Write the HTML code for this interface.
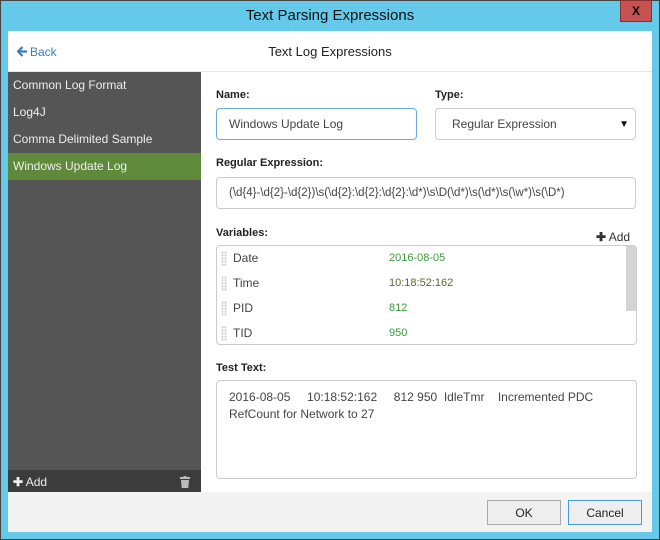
<!DOCTYPE html><html><head><style>
*{box-sizing:border-box;margin:0;padding:0}
body{width:660px;height:540px;background:#65c9ea;font-family:"Liberation Sans",sans-serif;position:relative;overflow:hidden;color:#333}
.a{position:absolute}
.border{left:0;top:0;width:660px;height:540px;border:1px solid #444;}
.lbl{font-size:11px;font-weight:bold;color:#222}
.inp{background:#fff;border:1px solid #ccc;border-radius:4px;font-size:12px;color:#444;padding-left:12px;display:flex;align-items:center}
.side div{height:27px;line-height:27px;padding-left:5px;color:#eee;font-size:12px}
.row{height:25px;position:relative;font-size:12px}
.row .n{position:absolute;left:16px;top:5px;color:#444}
.row .v{position:absolute;left:172px;top:6px;color:#3a9a3a;font-size:11px}
.row .g{position:absolute;left:4px;top:5px;width:6px;height:15px;background:radial-gradient(circle,#ccc 1px,transparent 1.2px) 0 0/3px 3px}
.btn{border:1px solid #aaa;background:#eee;font-size:12px;display:flex;align-items:center;justify-content:center;color:#222}
</style></head><body>
<div class="a border"></div>
<div class="a" style="left:0;top:7px;width:660px;text-align:center;font-size:15px;color:#111">Text Parsing Expressions</div>
<div class="a" style="left:620px;top:0;width:32px;height:22px;background:#c75050;border:1px solid #8a3030;color:#000;font-weight:bold;font-size:12px;text-align:center;line-height:20px">X</div>
<div class="a" style="left:8px;top:31px;width:644px;height:501px;background:#fff"></div>
<svg class="a" style="left:17px;top:46px" width="11" height="11" viewBox="0 0 11 11"><path d="M1 5.5H10M5.5 1L1 5.5 5.5 10" stroke="#3a7bbf" stroke-width="2.2" fill="none"/></svg>
<div class="a" style="left:30px;top:45px;font-size:12px;color:#3a7bbf">Back</div>
<div class="a" style="left:8px;top:44px;width:644px;text-align:center;font-size:13px;color:#222">Text Log Expressions</div>
<div class="a" style="left:8px;top:71px;width:644px;height:1px;background:#e4e4e4"></div>
<div class="a side" style="left:8px;top:72px;width:193px;height:420px;background:#555">
<div>Common Log Format</div><div>Log4J</div><div>Comma Delimited Sample</div><div style="background:#5f8a3c">Windows Update Log</div></div>
<div class="a" style="left:8px;top:470px;width:193px;height:22px;background:#3c3c3c;color:#eee;font-size:12px;line-height:24px;padding-left:5px"><b>✚</b> Add
<svg style="position:absolute;right:11px;top:6px" width="10" height="12" viewBox="0 0 10 12"><rect x="0" y="1" width="10" height="2" fill="#bbb"/><rect x="3.5" y="0" width="3" height="1.5" fill="#bbb"/><path d="M1 4h8l-.7 8H1.7z" fill="#bbb"/></svg></div>
<div class="a lbl" style="left:216px;top:89px">Name:</div>
<div class="a lbl" style="left:435px;top:89px">Type:</div>
<div class="a inp" style="left:216px;top:108px;width:201px;height:32px;border-color:#6aaae0">Windows Update Log</div>
<div class="a inp" style="left:435px;top:108px;width:201px;height:32px;padding-left:16px">Regular Expression<span style="position:absolute;right:6px;font-size:10px;color:#111">▼</span></div>
<div class="a lbl" style="left:216px;top:157px">Regular Expression:</div>
<div class="a inp" style="left:216px;top:177px;width:420px;height:32px;font-size:11.5px">(\d{4}-\d{2}-\d{2})\s(\d{2}:\d{2}:\d{2}:\d*)\s\D(\d*)\s(\d*)\s(\w*)\s(\D*)</div>
<div class="a lbl" style="left:216px;top:227px">Variables:</div>
<div class="a" style="left:596px;top:230px;font-size:12px;color:#333"><b>✚</b> Add</div>
<div class="a" style="left:216px;top:245px;width:421px;height:100px;border:1px solid #ccc;border-radius:4px;overflow:hidden;background:#fff">
<div class="a" style="right:0;top:0;width:10px;height:65px;background:#d4d4d4"></div>
<div class="row"><i class="g"></i><span class="n">Date</span><span class="v">2016-08-05</span></div>
<div class="row"><i class="g"></i><span class="n">Time</span><span class="v" style="color:#556b2f">10:18:52:162</span></div>
<div class="row"><i class="g"></i><span class="n">PID</span><span class="v">812</span></div>
<div class="row"><i class="g"></i><span class="n">TID</span><span class="v">950</span></div>
</div>
<div class="a lbl" style="left:216px;top:362px">Test Text:</div>
<div class="a" style="left:216px;top:380px;width:421px;height:99px;border:1px solid #ccc;border-radius:4px;padding:8px 12px;font-size:12px;line-height:17px;color:#444;white-space:pre">2016-08-05     10:18:52:162     812 950  IdleTmr    Incremented PDC
RefCount for Network to 27</div>
<div class="a" style="left:8px;top:492px;width:644px;height:40px;background:#f3f3f3"></div>
<div class="a btn" style="left:487px;top:500px;width:74px;height:25px">OK</div>
<div class="a btn" style="left:568px;top:500px;width:74px;height:25px;border-color:#4a9ae0">Cancel</div>
</body></html>
